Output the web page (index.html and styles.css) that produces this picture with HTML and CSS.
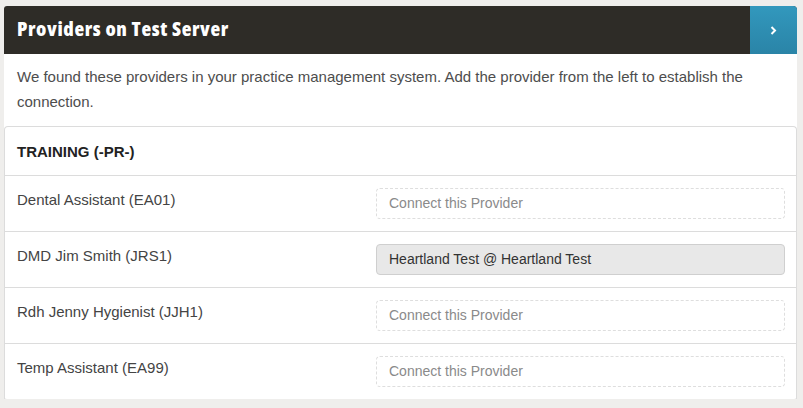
FILE: index.html
```html
<!DOCTYPE html>
<html lang="en">
<head>
<meta charset="utf-8">
<title>Providers on Test Server</title>
<link rel="stylesheet" href="styles.css">
</head>
<body>
<section class="panel">
  <header class="panel-head">
    <h1 class="panel-title">Providers on Test Server</h1>
    <button class="panel-next" type="button" aria-label="Next">
      <svg width="7" height="9" viewBox="0 0 7 9"><path d="M1.5 1 L5 4.5 L1.5 8" fill="none" stroke="#fff" stroke-width="2"/></svg>
    </button>
  </header>
  <p class="panel-desc">We found these providers in your practice management system. Add the provider from the left to establish the connection.</p>
  <div class="list">
    <div class="list-group">TRAINING (-PR-)</div>
    <div class="row">
      <div class="row-label">Dental Assistant (EA01)</div>
      <div class="slot slot-empty">Connect this Provider</div>
    </div>
    <div class="row">
      <div class="row-label">DMD Jim Smith (JRS1)</div>
      <div class="slot slot-filled">Heartland Test @ Heartland Test</div>
    </div>
    <div class="row">
      <div class="row-label">Rdh Jenny Hygienist (JJH1)</div>
      <div class="slot slot-empty">Connect this Provider</div>
    </div>
    <div class="row">
      <div class="row-label">Temp Assistant (EA99)</div>
      <div class="slot slot-empty">Connect this Provider</div>
    </div>
  </div>
</section>
</body>
</html>
```

FILE: styles.css
```css
html, body {
  margin: 0;
  padding: 0;
  background: #efeeec;
}
body {
  padding: 6px 6px 0 4px;
  font-family: "Liberation Sans", Arial, sans-serif;
  font-size: 15px;
  color: #444;
}
.panel {
  width: 793px;
  background: #fff;
  border-radius: 3px;
  box-shadow: 0 3px 0 #d8d8d8;
}
.panel-head {
  display: flex;
  height: 48px;
  background: #2e2c27;
  border-radius: 3px 4px 0 0;
  overflow: hidden;
}
.panel-title {
  flex: 1;
  margin: 0;
  padding: 0 0 2px 13px;
  font-family: "Open Sans", sans-serif;
  font-stretch: 75%;
  font-weight: 800;
  font-size: 20px;
  line-height: 46px;
  color: #fff;
  letter-spacing: 0.6px;
}
.panel-next {
  width: 47px;
  height: 48px;
  border: 0;
  padding: 0;
  margin: 0;
  background: linear-gradient(#3298bd, #2a84a7);
  display: flex;
  align-items: center;
  justify-content: center;
  cursor: pointer;
}
.panel-desc {
  margin: 0;
  padding: 10px 12px 12px 13px;
  line-height: 25px;
  color: #4d4d4d;
}
.list {
  border: 1px solid #dcdcdc;
  border-bottom: 0;
  border-radius: 4px 4px 0 0;
}
.list-group {
  padding: 15px 13px 13px 12px;
  line-height: 20px;
  font-weight: bold;
  color: #222;
}
.row {
  display: grid;
  grid-template-columns: 1fr 409px;
  border-top: 1px solid #dcdcdc;
  padding: 12px 11px 12px 12px;
}
.row-label {
  padding-top: 2px;
  line-height: 20px;
  color: #444;
}
.slot {
  box-sizing: border-box;
  height: 31px;
  line-height: 29px;
  padding: 0 12px;
  border-radius: 4px;
  font-size: 14px;
}
.slot-empty {
  border: 1px dashed #dedede;
  color: #8a8a8a;
}
.slot-filled {
  border: 1px solid #cfcfcf;
  background: #e8e8e8;
  color: #333;
}
```
